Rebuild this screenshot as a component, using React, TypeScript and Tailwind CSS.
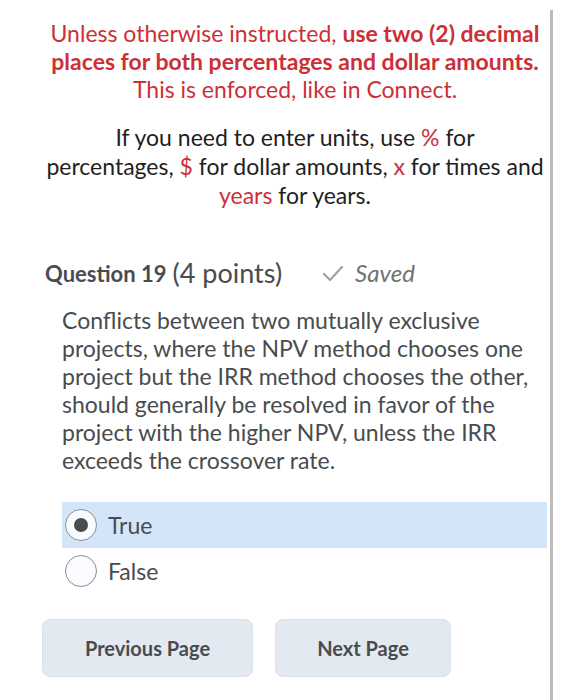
import React from "react";

const red = "text-[#cd2f37]";

const Radio = ({ checked }: { checked: boolean }) => (
  <span className="flex h-[32px] w-[32px] shrink-0 items-center justify-center rounded-full border-[1.5px] border-[#8a8f93] bg-[#f9fbff]">
    {checked && <span className="h-[14px] w-[14px] rounded-full bg-[#494c4e]" />}
  </span>
);

export default function App() {
  return (
    <div
      className="min-h-[700px] bg-white"
      style={{ fontFamily: "Lato, 'Open Sans', sans-serif" }}
    >
      <div className="mt-[10px] w-[553px] min-h-[690px] border-r-[3px] border-[#bcbcbc] pt-[9px]">
        <div className="ml-[43px] w-[504px] text-center text-[23px] leading-[28px]">
          <p className={red}>
            Unless otherwise instructed,{" "}
            <b className="font-bold">use two (2) decimal places for both percentages and dollar amounts.</b>{" "}
            This is enforced, like in Connect.
          </p>
          <p className="mt-[20px] leading-[29px] text-[#1f1f1f]">
            If you need to enter units, use <span className={red}>%</span> for
            <br />
            percentages, <span className={red}>$</span> for dollar amounts, <span className={red}>x</span> for
            times and
            <br />
            <span className={red}>years</span> for years.
          </p>
        </div>

        <div className="ml-[45px] mt-[47px] flex h-[32px] items-center text-[#494c4e]">
          <span className="text-[22px] font-bold">Question 19</span>
          <span className="ml-[6px] text-[27px]">(4 points)</span>
          <span className="ml-[40px] flex items-center text-[24px] italic text-[#6e7376]">
            <svg width="22" height="17" viewBox="0 0 22 17" className="mr-[11px]" fill="none">
              <path d="M2 9l6 6L20 2" stroke="#9da2a6" strokeWidth="2.2" strokeLinecap="round" strokeLinejoin="round" />
            </svg>
            Saved
          </span>
        </div>

        <p className="ml-[62px] mt-[17px] w-[476px] text-[23px] leading-[28px] text-[#494c4e]">
          Conflicts between two mutually exclusive projects, where the NPV method chooses one project but
          the IRR method chooses the other, should generally be resolved in favor of the project with the
          higher NPV, unless the IRR exceeds the crossover rate.
        </p>

        <div className="ml-[62px] mt-[28px] w-[485px] text-[23px] text-[#494c4e]">
          <label className="flex h-[46px] items-center gap-[11px] bg-[#d3e6f9] pl-[3px]">
            <Radio checked />
            <span>True</span>
          </label>
          <label className="flex h-[46px] items-center gap-[11px] pl-[3px]">
            <Radio checked={false} />
            <span>False</span>
          </label>
        </div>

        <div className="ml-[42px] mt-[25px] flex gap-[22px] text-[20px] font-bold text-[#494c4e]">
          <button className="h-[58px] w-[211px] rounded-[8px] border border-[#dbe2ea] bg-[#e3e9f1]">
            Previous Page
          </button>
          <button className="h-[58px] w-[176px] rounded-[8px] border border-[#dbe2ea] bg-[#e3e9f1]">
            Next Page
          </button>
        </div>
      </div>
    </div>
  );
}
